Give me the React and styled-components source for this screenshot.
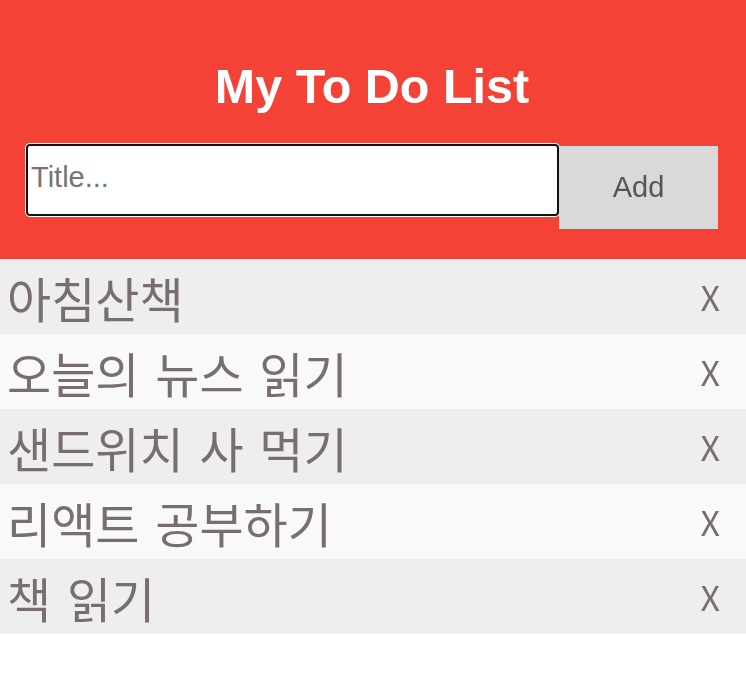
import React, { useState } from "react";
import styled, { createGlobalStyle } from "styled-components";

const GlobalStyle = createGlobalStyle`
  body {
    margin: 0;
    background: #fff;
    font-family: "Liberation Sans", Arial, sans-serif;
  }
  * { box-sizing: border-box; }
`;

const initialTodos = [
  "아침산책",
  "오늘의 뉴스 읽기",
  "샌드위치 사 먹기",
  "리액트 공부하기",
  "책 읽기",
];

function App() {
  const [todos, setTodos] = useState(initialTodos);
  const [title, setTitle] = useState("");

  const addTodo = () => {
    if (!title.trim()) return;
    setTodos([...todos, title]);
    setTitle("");
  };

  return (
    <>
      <GlobalStyle />
      <Header>
        <Heading>My To Do List</Heading>
        <InputRow>
          <TitleInput
            autoFocus
            placeholder="Title..."
            value={title}
            onChange={(e) => setTitle(e.target.value)}
          />
          <AddButton onClick={addTodo}>Add</AddButton>
        </InputRow>
      </Header>
      <List>
        {todos.map((todo, i) => (
          <Item key={todo + i} odd={i % 2 === 1}>
            <ItemText>{todo}</ItemText>
            <Close onClick={() => setTodos(todos.filter((_, j) => j !== i))}>
              X
            </Close>
          </Item>
        ))}
      </List>
    </>
  );
}

const Header = styled.div`
  background-color: #f44336;
  padding: 59px 28px 30px 26px;
  text-align: center;
`;

const Heading = styled.h2`
  margin: 0 0 31px;
  color: #fff;
  font-family: "Liberation Sans", Arial, sans-serif;
  font-weight: 700;
  font-size: 48.5px;
  line-height: 54px;
`;

const InputRow = styled.div`
  display: flex;
  align-items: flex-start;
`;

const TitleInput = styled.input`
  width: 533px;
  height: 72px;
  margin: 0;
  padding: 0 0 6px 3px;
  border: 2px solid #111;
  border-radius: 4px;
  box-shadow: 0 0 0 1px #fff;
  outline: none;
  background: #fff;
  font-family: "Liberation Sans", Arial, sans-serif;
  font-size: 29px;
  color: #333;

  &::placeholder {
    color: #757575;
  }
`;

const AddButton = styled.span`
  display: flex;
  align-items: center;
  justify-content: center;
  width: 159px;
  height: 83px;
  margin-top: 2px;
  background: #d9d9d9;
  color: #555;
  font-family: "Liberation Sans", Arial, sans-serif;
  font-size: 29px;
  cursor: pointer;
`;

const List = styled.ul`
  margin: 0;
  padding: 0;
  list-style: none;
`;

const Item = styled.li`
  display: flex;
  align-items: center;
  justify-content: space-between;
  height: 75px;
  padding: 1px 26px 0 7px;
  background: ${(p) => (p.odd ? "#f9f9f9" : "#eee")};
  color: #786e70;
  font-family: "Noto Sans CJK KR", "Noto Sans", sans-serif;
`;

const ItemText = styled.span`
  font-size: 48px;
  line-height: 1;
  word-spacing: 5px;
`;

const Close = styled.span`
  font-size: 34px;
  line-height: 1;
  cursor: pointer;
`;

export default App;
